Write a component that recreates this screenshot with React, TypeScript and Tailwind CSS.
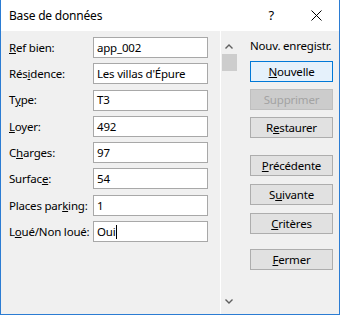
import React from 'react';

const fields: Array<{ label: React.ReactNode; value: string; caret?: boolean }> = [
  { label: <><u>R</u>ef bien:</>, value: 'app_002' },
  { label: <>Rés<u>i</u>dence:</>, value: "Les villas d'Épure" },
  { label: <>T<u>y</u>pe:</>, value: 'T3' },
  { label: <><u>L</u>oyer:</>, value: '492' },
  { label: <>C<u>h</u>arges:</>, value: '97' },
  { label: <>Surfac<u>e</u>:</>, value: '54' },
  { label: <>Places par<u>k</u>ing:</>, value: '1' },
  { label: <>L<u>o</u>ué/Non loué:</>, value: 'Oui', caret: true },
];

function Btn({ children, variant = 'normal', className = '' }: { children: React.ReactNode; variant?: 'default' | 'normal' | 'disabled'; className?: string }) {
  const styles =
    variant === 'default'
      ? 'bg-[#e5f1fb] border-[#0078d7] text-black'
      : variant === 'disabled'
      ? 'bg-[#cccccc] border-[#bfbfbf] text-[#a3a3a3]'
      : 'bg-[#e1e1e1] border-[#adadad] text-black';
  return (
    <div className={`h-[21px] w-[83px] border flex items-center justify-center leading-none ${styles} ${className}`}>
      {children}
    </div>
  );
}

export default function App() {
  return (
    <div
      className="w-[340px] h-[315px] border border-t-0 border-[#2b7cd3] bg-[#f0f0f0] flex flex-col text-[11.5px] tracking-[-0.2px] text-black"
      style={{ fontFamily: '"Noto Sans", "Segoe UI", sans-serif' }}
    >
      {/* Title bar */}
      <div className="h-[31px] bg-white flex items-center shrink-0">
        <span className="pl-[8px] text-[12px]">Base de données</span>
        <span className="ml-auto mr-[37px] text-[13px]">?</span>
        <svg width="11" height="11" viewBox="0 0 11 11" className="mr-[17px]">
          <path d="M0.5 0.5 L10.5 10.5 M10.5 0.5 L0.5 10.5" stroke="#000" strokeWidth="1" />
        </svg>
      </div>

      <div className="flex flex-1">
        {/* Form fields */}
        <div className="w-[219px] pl-[8px] pt-[6px] flex flex-col gap-[5.3px]">
          {fields.map((f, i) => (
            <div key={i} className="flex items-center h-[21px]">
              <div className="w-[84px] whitespace-nowrap">{f.label}</div>
              <div className="w-[115px] h-[21px] bg-white border border-[#a8a8a8] flex items-center pl-[3px]">
                <span>{f.value}</span>
                {f.caret && <span className="w-px h-[14px] bg-black ml-px" />}
              </div>
            </div>
          ))}
        </div>

        {/* Scrollbar */}
        <div className="w-[17px] border-l border-white flex flex-col items-center pt-[13px] pb-[10px]">
          <svg width="8" height="5" viewBox="0 0 8 5">
            <path d="M0.5 4.5 L4 1 L7.5 4.5" stroke="#606060" strokeWidth="1.4" fill="none" />
          </svg>
          <div className="w-[15px] h-[17px] bg-[#cdcdcd] mt-[5px]" />
          <svg width="8" height="5" viewBox="0 0 8 5" className="mt-auto">
            <path d="M0.5 0.5 L4 4 L7.5 0.5" stroke="#606060" strokeWidth="1.4" fill="none" />
          </svg>
        </div>

        {/* Buttons */}
        <div className="pl-[13px] pt-[8px] flex flex-col">
          <div className="h-[14px] leading-[14px] whitespace-nowrap">Nouv. enregistr.</div>
          <Btn variant="default" className="mt-[8px]"><span><u>N</u>ouvelle</span></Btn>
          <Btn variant="disabled" className="mt-[7px]">Supprimer</Btn>
          <Btn className="mt-[7px]"><span>R<u>e</u>staurer</span></Btn>
          <Btn className="mt-[17px]"><span><u>P</u>récédente</span></Btn>
          <Btn className="mt-[8px]"><span>S<u>u</u>ivante</span></Btn>
          <Btn className="mt-[8px]"><span><u>C</u>ritères</span></Btn>
          <Btn className="mt-[15px]"><span><u>F</u>ermer</span></Btn>
        </div>
      </div>
    </div>
  );
}
